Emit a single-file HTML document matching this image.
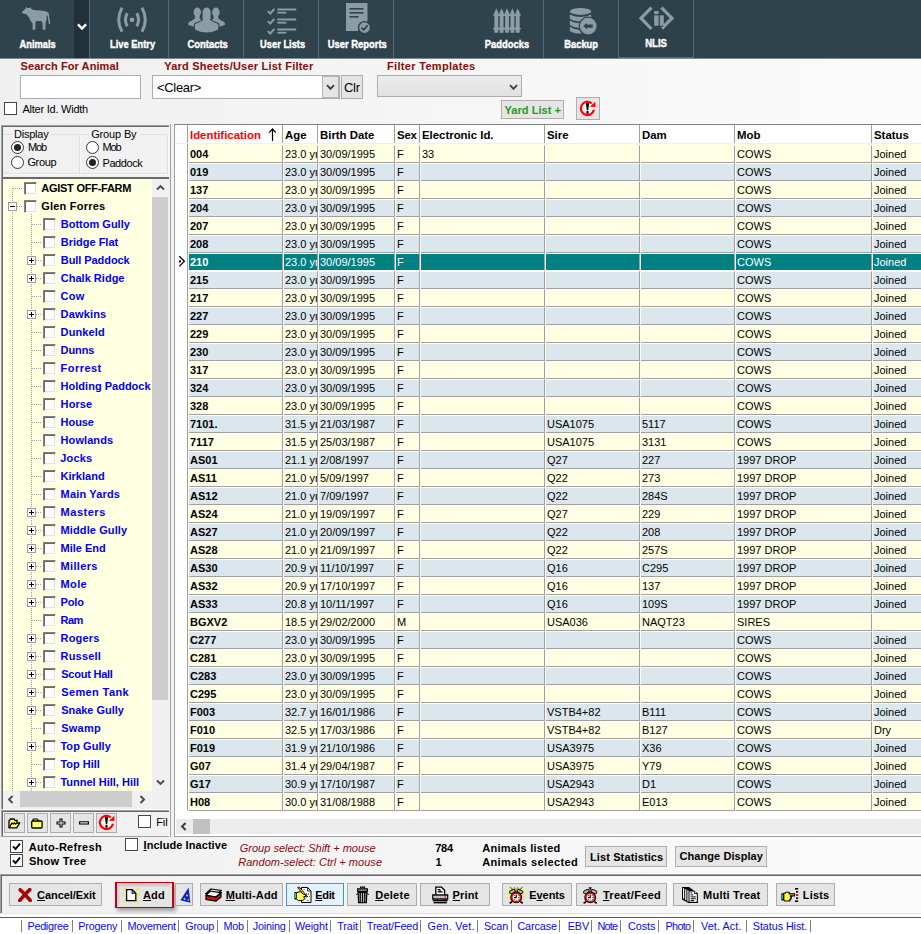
<!DOCTYPE html><html><head><meta charset="utf-8"><title>Animals</title><style>
html,body{margin:0;padding:0;}
body{width:921px;height:934px;overflow:hidden;background:linear-gradient(90deg,#f0f0f0,#fbfbfb);position:relative;
 font-family:"Liberation Sans",sans-serif;font-size:11px;color:#000;}
.a{position:absolute;}
.t{position:absolute;white-space:nowrap;line-height:14px;}
.b{font-weight:bold;}
#tb{position:absolute;left:0;top:0;width:921px;height:58px;background:#2f434d;}
.sep{position:absolute;top:0;width:1px;height:58px;background:#55696f;}
.tbl{position:absolute;top:36.6px;width:100px;text-align:center;color:#fff;font-weight:bold;font-size:10.6px;line-height:14px;white-space:nowrap;-webkit-text-stroke:.4px #fff;}
.tbl span{display:inline-block;transform-origin:50% 50%;}
.inp{position:absolute;background:#fff;border:1px solid #abadb3;box-sizing:border-box;}
.btn{position:absolute;box-sizing:border-box;border:1px solid #adadad;background:#e5e5e5;}
.cb{position:absolute;width:13px;height:13px;box-sizing:border-box;border:1px solid #464646;background:#fff;}
.cb3{position:absolute;width:13px;height:13px;box-sizing:border-box;background:#fff;border:1px solid;border-color:#808080 #fff #fff #808080;box-shadow:inset 1px 1px 0 #696969,inset -1px -1px 0 #e3e3e3;}
.rad{position:absolute;width:13px;height:13px;box-sizing:border-box;border:1px solid #333;border-radius:50%;background:#fff;}
.rad.on:after{content:"";position:absolute;left:2px;top:2px;width:7px;height:7px;border-radius:50%;background:#222;}
.tr{position:absolute;white-space:nowrap;font-weight:bold;font-size:11px;line-height:14px;}
.blue{color:#0000f0;}
.pm{position:absolute;width:9px;height:9px;box-sizing:border-box;border:1px solid #9a9aa6;background:#fff;}
.pm:before{content:"";position:absolute;left:1px;top:3px;width:5px;height:1px;background:#000;}
.pm.plus:after{content:"";position:absolute;left:3px;top:1px;width:1px;height:5px;background:#000;}
.dv{position:absolute;width:1px;background-image:linear-gradient(#a0a0a0 50%,transparent 50%);background-size:1px 2px;}
.dh{position:absolute;height:1px;background-image:linear-gradient(90deg,#a0a0a0 50%,transparent 50%);background-size:2px 1px;}
.row{position:absolute;left:188px;width:733px;height:18px;}
.cell{position:absolute;top:0;height:18px;box-sizing:border-box;border-top:1px solid #fff;border-bottom:1px solid #a0a0a0;border-right:1px solid #a0a0a0;border-left:1px solid #fff;overflow:hidden;white-space:nowrap;line-height:16px;padding-left:1px;font-size:11px;}
.y .cell{background:#ffffe4;}
.g .cell{background:#dbe6ed;}
.s .cell{background:#008080;color:#fff;border-bottom-color:#fff;}
.hc{position:absolute;top:125px;height:19px;box-sizing:border-box;border-right:1px solid #a0a0a0;line-height:21px;font-weight:bold;font-size:11.4px;padding-left:2px;white-space:nowrap;overflow:hidden;background:#fff;}
.tsep{position:absolute;top:920px;width:1px;height:12px;background:#808080;}
u{text-decoration:underline;}
</style></head><body>
<div class="a" style="left:0;top:58px;width:921px;height:1px;background:#7a8990"></div>
<div id="tb">
<div class="a" style="left:74px;top:0;width:15px;height:58px;background:#20313a"></div>
<svg class="a" style="left:77px;top:23px" width="10" height="8" viewBox="0 0 10 8"><path d="M0.9 1.4 L5 5.5 L9.1 1.4" fill="none" stroke="#fff" stroke-width="2.4"/></svg>
<div class="a" style="left:619px;top:0;width:74px;height:57px;background:#2d414b;border-bottom:1px solid #55696f"></div>
<div class="sep" style="left:89px"></div>
<div class="sep" style="left:168px"></div>
<div class="sep" style="left:243px"></div>
<div class="sep" style="left:318px"></div>
<div class="sep" style="left:393px"></div>
<div class="sep" style="left:543px"></div>
<div class="sep" style="left:618px"></div>
<div class="sep" style="left:693px"></div>
<div class="tbl" style="left:-12.25px;margin-top:0px"><span style="transform:scaleX(0.881)">Animals</span></div>
<div class="tbl" style="left:82.45px;margin-top:0px"><span style="transform:scaleX(0.880)">Live Entry</span></div>
<div class="tbl" style="left:157.20px;margin-top:0px"><span style="transform:scaleX(0.890)">Contacts</span></div>
<div class="tbl" style="left:232.35px;margin-top:0px"><span style="transform:scaleX(0.880)">User Lists</span></div>
<div class="tbl" style="left:307.50px;margin-top:0px"><span style="transform:scaleX(0.889)">User Reports</span></div>
<div class="tbl" style="left:457.20px;margin-top:0px"><span style="transform:scaleX(0.886)">Paddocks</span></div>
<div class="tbl" style="left:531.30px;margin-top:0px"><span style="transform:scaleX(0.877)">Backup</span></div>
<div class="tbl" style="left:606.45px;margin-top:-0.8px"><span style="transform:scaleX(0.900)">NLIS</span></div>
<svg class="a" style="left:0;top:0" width="921" height="58" viewBox="0 0 921 58"><path fill="#8b9ca6" d="M21.8 12 L23.5 10.6 L25.6 8.8 L26 7 L27.6 8.1 L29.6 8.1 L30.8 6.9 L31.2 9 L34 10 L40 10.4 L45.3 11.2 L47.6 12 L48.8 13.6 L49.4 18 L50.2 22 L50 24.2 L48.8 24 L48.4 21 L47.6 15.6 L46.8 15.4 L46.5 20 L45.6 22.6 L45.5 29.8 L42.7 29.8 L42.6 23.6 L41.4 21 L36.6 21 L35.4 22.6 L35.4 29.8 L32.6 29.8 L32.6 23.6 L30.4 20.6 L28.8 17 L26.4 14.2 L24 13.8 L22.2 13.2 Z"/><g fill="none" stroke="#8b9ca6" stroke-width="3"><path d="M122 7.8 Q115.4 19.8 122 31.8"/><path d="M142 7.8 Q148.6 19.8 142 31.8"/><path d="M127.2 13.3 Q123.8 19.8 127.2 26.3"/><path d="M136.8 13.3 Q140.2 19.8 136.8 26.3"/></g><circle cx="132" cy="19.8" r="2.4" fill="#8b9ca6"/><ellipse cx="197.3" cy="12.2" rx="3.7" ry="4.7" fill="#8b9ca6"/><path fill="#8b9ca6" d="M195.0 16 L195.0 18.2 L192.0 20.6 L189.4 21.8 L188.3 23 L188.4 25 L193.6 26.8 L202.0 21 L199.6 18.2 L199.6 16 Z"/><ellipse cx="215.9" cy="12.2" rx="3.7" ry="4.7" fill="#8b9ca6"/><path fill="#8b9ca6" d="M218.2 16 L218.2 18.2 L221.2 20.6 L223.8 21.8 L224.9 23 L224.8 25 L219.6 26.8 L211.2 21 L213.6 18.2 L213.6 16 Z"/><ellipse cx="206.6" cy="12.6" rx="4.7" ry="5.7" fill="#8b9ca6" stroke="#2f434d" stroke-width="1.1"/><path fill="#8b9ca6" stroke="#2f434d" stroke-width="1.1" d="M202.8 16.5 L202.8 19 Q202.5 20.5 199 21.8 L195.5 23.2 Q194.2 23.8 194.2 25.5 L194.4 29.6 Q200 33 206.6 33 Q213.2 33 218.8 29.6 L219 25.5 Q219 23.8 217.8 23.2 L214.2 21.8 Q210.7 20.5 210.4 19 L210.4 16.5 Z"/><rect x="202.6" y="14" width="8" height="5" fill="#8b9ca6"/><path d="M267.8 11.100000000000001 L270.2 13.5 L274.40000000000003 8.9" fill="none" stroke="#8b9ca6" stroke-width="2"/><rect x="277.4" y="8.5" width="18.8" height="2" fill="#8b9ca6"/><rect x="277.4" y="11.8" width="9" height="1.8" fill="#8b9ca6"/><path d="M267.8 21.099999999999998 L270.2 23.5 L274.40000000000003 18.9" fill="none" stroke="#8b9ca6" stroke-width="2"/><rect x="277.4" y="18.5" width="18.8" height="2" fill="#8b9ca6"/><rect x="277.4" y="21.8" width="9" height="1.8" fill="#8b9ca6"/><path d="M267.8 31.099999999999998 L270.2 33.5 L274.40000000000003 28.9" fill="none" stroke="#8b9ca6" stroke-width="2"/><rect x="277.4" y="28.5" width="18.8" height="2" fill="#8b9ca6"/><rect x="277.4" y="31.8" width="9" height="1.8" fill="#8b9ca6"/><path fill="#8b9ca6" d="M346 3 H367.5 V21.5 Q358.5 22 358 31 H346 Z"/><g fill="#2f434d"><rect x="349.5" y="8" width="14" height="1.6"/><rect x="349.5" y="12" width="14" height="1.6"/><rect x="349.5" y="16" width="9" height="1.6"/></g><circle cx="364.5" cy="27.6" r="6" fill="#8b9ca6" stroke="#2f434d" stroke-width="1.4"/><path d="M361.4 27.6 L363.8 29.8 L367.6 25.4" fill="none" stroke="#2f434d" stroke-width="1.8"/><path fill="#8b9ca6" d="M494.35 32.7 V12.6 L496.30 8.3 L498.25 12.6 V32.7 Z"/><path fill="#8b9ca6" d="M499.65 32.7 V12.6 L501.60 8.3 L503.55 12.6 V32.7 Z"/><path fill="#8b9ca6" d="M505.05 32.7 V12.6 L507.00 8.3 L508.95 12.6 V32.7 Z"/><path fill="#8b9ca6" d="M510.45 32.7 V12.6 L512.40 8.3 L514.35 12.6 V32.7 Z"/><path fill="#8b9ca6" d="M515.75 32.7 V12.6 L517.70 8.3 L519.65 12.6 V32.7 Z"/><path fill="#8b9ca6" d="M492.8 14.799999999999999 L494 13.7 H520 L521.2 14.799999999999999 L520 15.899999999999999 H494 Z"/><path fill="#8b9ca6" d="M492.8 28.700000000000003 L494 27.6 H520 L521.2 28.700000000000003 L520 29.8 H494 Z"/><g fill="#8b9ca6"><ellipse cx="580.5" cy="11.4" rx="10.7" ry="3.5"/><path d="M569.8 14.6 Q580.5 19.6 591.2 14.6 V17.2 Q583 18 580.6 21.4 Q574 21.4 569.8 18.8 Z"/><path d="M569.8 20.6 Q574 23.2 579.8 23.2 Q578.9 25.6 579.2 28 Q573.4 27.6 569.8 25 Z"/><path d="M569.8 26.8 Q573.4 29.4 579.5 29.8 Q580.4 32.2 582 33.6 Q574 33.8 569.8 31 Z"/><circle cx="588.2" cy="26.1" r="9" stroke="#2f434d" stroke-width="1.2"/></g><path d="M583.1 26.1 L586.8 22.9 V24.5 H592.8 V27.7 H586.8 V29.3 Z" fill="#2f434d"/><g fill="none" stroke="#8b9ca6" stroke-width="3.2"><path d="M651.5 7.6 L641 18.2 L651.5 29"/><path d="M661.5 7.6 L672 18.2 L663.5 26.6"/></g><g fill="#8b9ca6"><rect x="654.2" y="11" width="4.4" height="3"/><rect x="654.2" y="15.3" width="4.4" height="10.4"/><rect x="659.8" y="15.3" width="4" height="10.4"/><path d="M660.6 27 H665.6 L663.1 29.8 Z"/></g></svg>
</div>
<div class="t" style="left:20.50px;top:59px;font-size:11px;letter-spacing:0.091px;font-weight:bold;color:#8b0a0a;">Search For Animal</div>
<div class="inp" style="left:20px;top:75px;width:121px;height:24px"></div>
<div class="cb" style="left:4px;top:102px"></div>
<div class="t" style="left:22.50px;top:102px;font-size:11px;letter-spacing:-0.239px;">Alter Id. Width</div>
<div class="t" style="left:164.25px;top:59px;font-size:11px;letter-spacing:0.220px;font-weight:bold;color:#8b0a0a;">Yard Sheets/User List Filter</div>
<div class="inp" style="left:152px;top:75px;width:188px;height:24px"><div class="t" style="left:4.00px;top:4px;font-size:13px;letter-spacing:-0.330px;line-height:15px;">&lt;Clear&gt;</div><div class="a" style="right:0;top:0;width:17px;height:22px;box-sizing:border-box;background:#e5e5e5;border:1px solid #b4b4b4"></div><svg class="a" style="right:4px;top:8px" width="9" height="7" viewBox="0 0 9 7"><path d="M1 1.2 L4.5 4.8 L8 1.2" fill="none" stroke="#404040" stroke-width="1.9"/></svg></div>
<div class="btn" style="left:341px;top:75px;width:22px;height:24px"><div class="t" style="left:2.00px;top:4px;font-size:13px;letter-spacing:-0.287px;line-height:15px;">Clr</div></div>
<div class="t" style="left:387.10px;top:59px;font-size:11px;letter-spacing:0.305px;font-weight:bold;color:#8b0a0a;">Filter Templates</div>
<div class="a" style="left:377px;top:75px;width:145px;height:22px;box-sizing:border-box;border:1px solid #adadad;background:linear-gradient(#ececec,#e1e1e1)"><svg class="a" style="right:3px;top:8px" width="9" height="7" viewBox="0 0 9 7"><path d="M1 1.2 L4.5 4.8 L8 1.2" fill="none" stroke="#404040" stroke-width="1.9"/></svg></div>
<div class="btn" style="left:501px;top:100px;width:63px;height:19px"><div class="t" style="left:2.60px;top:2px;font-size:11px;letter-spacing:0.044px;font-weight:bold;color:#1c9b1c;">Yard List +</div></div>
<div class="btn" style="left:576px;top:97px;width:24px;height:23px"><svg class="a" style="left:2px;top:2px" width="17" height="17" viewBox="0 0 17 17"><circle cx="8.5" cy="8.4" r="6.6" fill="#f6f6f6"/><path d="M14.95 9.8 A6.6 6.6 0 1 1 12.74 3.34" fill="none" stroke="#ff0000" stroke-width="2.2"/><path d="M10.8 6.7 L16.4 1.7 L16.4 6.9 Z" fill="#ff0000"/><path d="M6.9 3.1 H10.1 L9.2 10.2 H7.8 Z" fill="#000"/><rect x="7.3" y="11.1" width="2.4" height="2.6" rx=".8" fill="#000"/></svg></div>
<div class="a" style="left:1px;top:125px;width:168px;height:685px;box-sizing:border-box;border-top:1px solid #a0a0a0;border-left:1px solid #a0a0a0;border-bottom:1px solid #fff;box-shadow:inset 1px 1px 0 #696969;"></div>
<div class="a" style="left:1px;top:810px;width:168px;height:27px;box-sizing:border-box;border-top:1px solid #a0a0a0;border-left:1px solid #a0a0a0;border-bottom:1px solid #a0a0a0;box-shadow:inset 1px 1px 0 #696969;"></div>
<div class="a" style="left:169px;top:124px;width:1px;height:713px;background:#f8f8f8"></div><div class="a" style="left:170px;top:124px;width:1px;height:713px;background:#a0a0a0"></div>
<div class="a" style="left:3px;top:134px;width:77px;height:40px;box-sizing:border-box;border:1px solid #e0e0e0;border-left:none;box-shadow:1px 1px 0 #fafafa"></div>
<div class="a" style="left:80px;top:134px;width:88px;height:40px;box-sizing:border-box;border:1px solid #e0e0e0;border-left:none;box-shadow:1px 1px 0 #fafafa"></div>
<div class="a" style="left:12px;top:130px;width:39px;height:8px;background:#f0f0f0"></div>
<div class="a" style="left:89px;top:130px;width:50px;height:8px;background:#f0f0f0"></div>
<div class="t" style="left:14.00px;top:127px;font-size:11px;letter-spacing:-0.232px;">Display</div>
<div class="t" style="left:91.20px;top:127px;font-size:11px;letter-spacing:-0.154px;">Group By</div>
<div class="rad on" style="left:11px;top:141px"></div><div class="t" style="left:27.90px;top:140px;font-size:11px;letter-spacing:-1.141px;">Mob</div>
<div class="rad" style="left:11px;top:156px"></div><div class="t" style="left:27.40px;top:155px;font-size:11px;letter-spacing:-0.323px;">Group</div>
<div class="rad" style="left:86px;top:141px"></div><div class="t" style="left:102.50px;top:140px;font-size:11px;letter-spacing:-1.091px;">Mob</div>
<div class="rad on" style="left:86px;top:156px"></div><div class="t" style="left:102.50px;top:156px;font-size:11px;letter-spacing:-0.433px;">Paddock</div>
<div class="a" style="left:3px;top:177px;width:166px;height:2px;background:#696969;z-index:3"></div>
<div class="a" style="left:3px;top:178px;width:149px;height:613px;background:#ffffe1;overflow:hidden">
<div class="dv" style="left:9px;top:10px;height:604px"></div>
<div class="dv" style="left:28px;top:36px;height:578px"></div>
<div class="dh" style="left:10px;top:10px;width:10px"></div>
<div class="cb3" style="left:21px;top:4px"></div>
<div class="t" style="left:38.20px;top:3px;font-size:11px;letter-spacing:-0.246px;font-weight:bold;">AGIST OFF-FARM</div>
<div class="dh" style="left:10px;top:28px;width:10px"></div>
<div class="pm minus" style="left:5px;top:24px"></div>
<div class="cb3" style="left:21px;top:22px"></div>
<div class="t" style="left:38.20px;top:21px;font-size:11px;letter-spacing:0.216px;font-weight:bold;">Glen Forres</div>
<div class="dh" style="left:29px;top:46px;width:9px"></div>
<div class="cb3" style="left:40px;top:40px"></div>
<div class="t" style="left:57.80px;top:39px;font-size:11px;letter-spacing:-0.002px;font-weight:bold;color:#0000f0;">Bottom Gully</div>
<div class="dh" style="left:29px;top:64px;width:9px"></div>
<div class="cb3" style="left:40px;top:58px"></div>
<div class="t" style="left:57.80px;top:57px;font-size:11px;letter-spacing:-0.007px;font-weight:bold;color:#0000f0;">Bridge Flat</div>
<div class="dh" style="left:29px;top:82px;width:9px"></div>
<div class="pm plus" style="left:24px;top:78px"></div>
<div class="cb3" style="left:40px;top:76px"></div>
<div class="t" style="left:57.80px;top:75px;font-size:11px;letter-spacing:-0.071px;font-weight:bold;color:#0000f0;">Bull Paddock</div>
<div class="dh" style="left:29px;top:100px;width:9px"></div>
<div class="pm plus" style="left:24px;top:96px"></div>
<div class="cb3" style="left:40px;top:94px"></div>
<div class="t" style="left:57.80px;top:93px;font-size:11px;letter-spacing:0.011px;font-weight:bold;color:#0000f0;">Chalk Ridge</div>
<div class="dh" style="left:29px;top:118px;width:9px"></div>
<div class="cb3" style="left:40px;top:112px"></div>
<div class="t" style="left:57.60px;top:111px;font-size:11px;letter-spacing:0.231px;font-weight:bold;color:#0000f0;">Cow</div>
<div class="dh" style="left:29px;top:136px;width:9px"></div>
<div class="pm plus" style="left:24px;top:132px"></div>
<div class="cb3" style="left:40px;top:130px"></div>
<div class="t" style="left:57.60px;top:129px;font-size:11px;letter-spacing:0.164px;font-weight:bold;color:#0000f0;">Dawkins</div>
<div class="dh" style="left:29px;top:154px;width:9px"></div>
<div class="cb3" style="left:40px;top:148px"></div>
<div class="t" style="left:57.60px;top:147px;font-size:11px;letter-spacing:0.103px;font-weight:bold;color:#0000f0;">Dunkeld</div>
<div class="dh" style="left:29px;top:172px;width:9px"></div>
<div class="cb3" style="left:40px;top:166px"></div>
<div class="t" style="left:57.60px;top:165px;font-size:11px;letter-spacing:-0.084px;font-weight:bold;color:#0000f0;">Dunns</div>
<div class="dh" style="left:29px;top:190px;width:9px"></div>
<div class="cb3" style="left:40px;top:184px"></div>
<div class="t" style="left:57.60px;top:183px;font-size:11px;letter-spacing:0.453px;font-weight:bold;color:#0000f0;">Forrest</div>
<div class="dh" style="left:29px;top:208px;width:9px"></div>
<div class="cb3" style="left:40px;top:202px"></div>
<div class="t" style="left:57.60px;top:201px;font-size:11px;letter-spacing:0.012px;font-weight:bold;color:#0000f0;">Holding Paddock</div>
<div class="dh" style="left:29px;top:226px;width:9px"></div>
<div class="cb3" style="left:40px;top:220px"></div>
<div class="t" style="left:57.60px;top:219px;font-size:11px;letter-spacing:0.097px;font-weight:bold;color:#0000f0;">Horse</div>
<div class="dh" style="left:29px;top:244px;width:9px"></div>
<div class="cb3" style="left:40px;top:238px"></div>
<div class="t" style="left:57.60px;top:237px;font-size:11px;letter-spacing:-0.055px;font-weight:bold;color:#0000f0;">House</div>
<div class="dh" style="left:29px;top:262px;width:9px"></div>
<div class="cb3" style="left:40px;top:256px"></div>
<div class="t" style="left:57.60px;top:255px;font-size:11px;letter-spacing:0.075px;font-weight:bold;color:#0000f0;">Howlands</div>
<div class="dh" style="left:29px;top:280px;width:9px"></div>
<div class="cb3" style="left:40px;top:274px"></div>
<div class="t" style="left:57.30px;top:273px;font-size:11px;letter-spacing:0.172px;font-weight:bold;color:#0000f0;">Jocks</div>
<div class="dh" style="left:29px;top:298px;width:9px"></div>
<div class="cb3" style="left:40px;top:292px"></div>
<div class="t" style="left:57.60px;top:291px;font-size:11px;letter-spacing:-0.000px;font-weight:bold;color:#0000f0;">Kirkland</div>
<div class="dh" style="left:29px;top:316px;width:9px"></div>
<div class="cb3" style="left:40px;top:310px"></div>
<div class="t" style="left:57.60px;top:309px;font-size:11px;letter-spacing:0.157px;font-weight:bold;color:#0000f0;">Main Yards</div>
<div class="dh" style="left:29px;top:334px;width:9px"></div>
<div class="pm plus" style="left:24px;top:330px"></div>
<div class="cb3" style="left:40px;top:328px"></div>
<div class="t" style="left:57.60px;top:327px;font-size:11px;letter-spacing:0.518px;font-weight:bold;color:#0000f0;">Masters</div>
<div class="dh" style="left:29px;top:352px;width:9px"></div>
<div class="pm plus" style="left:24px;top:348px"></div>
<div class="cb3" style="left:40px;top:346px"></div>
<div class="t" style="left:57.60px;top:345px;font-size:11px;letter-spacing:0.102px;font-weight:bold;color:#0000f0;">Middle Gully</div>
<div class="dh" style="left:29px;top:370px;width:9px"></div>
<div class="pm plus" style="left:24px;top:366px"></div>
<div class="cb3" style="left:40px;top:364px"></div>
<div class="t" style="left:57.60px;top:363px;font-size:11px;letter-spacing:-0.020px;font-weight:bold;color:#0000f0;">Mile End</div>
<div class="dh" style="left:29px;top:388px;width:9px"></div>
<div class="pm plus" style="left:24px;top:384px"></div>
<div class="cb3" style="left:40px;top:382px"></div>
<div class="t" style="left:57.60px;top:381px;font-size:11px;letter-spacing:0.324px;font-weight:bold;color:#0000f0;">Millers</div>
<div class="dh" style="left:29px;top:406px;width:9px"></div>
<div class="pm plus" style="left:24px;top:402px"></div>
<div class="cb3" style="left:40px;top:400px"></div>
<div class="t" style="left:57.60px;top:399px;font-size:11px;letter-spacing:0.325px;font-weight:bold;color:#0000f0;">Mole</div>
<div class="dh" style="left:29px;top:424px;width:9px"></div>
<div class="pm plus" style="left:24px;top:420px"></div>
<div class="cb3" style="left:40px;top:418px"></div>
<div class="t" style="left:57.60px;top:417px;font-size:11px;letter-spacing:-0.185px;font-weight:bold;color:#0000f0;">Polo</div>
<div class="dh" style="left:29px;top:442px;width:9px"></div>
<div class="cb3" style="left:40px;top:436px"></div>
<div class="t" style="left:57.60px;top:435px;font-size:11px;letter-spacing:-0.628px;font-weight:bold;color:#0000f0;">Ram</div>
<div class="dh" style="left:29px;top:460px;width:9px"></div>
<div class="pm plus" style="left:24px;top:456px"></div>
<div class="cb3" style="left:40px;top:454px"></div>
<div class="t" style="left:57.60px;top:453px;font-size:11px;letter-spacing:0.184px;font-weight:bold;color:#0000f0;">Rogers</div>
<div class="dh" style="left:29px;top:478px;width:9px"></div>
<div class="pm plus" style="left:24px;top:474px"></div>
<div class="cb3" style="left:40px;top:472px"></div>
<div class="t" style="left:57.60px;top:471px;font-size:11px;letter-spacing:0.180px;font-weight:bold;color:#0000f0;">Russell</div>
<div class="dh" style="left:29px;top:496px;width:9px"></div>
<div class="pm plus" style="left:24px;top:492px"></div>
<div class="cb3" style="left:40px;top:490px"></div>
<div class="t" style="left:58.20px;top:489px;font-size:11px;letter-spacing:-0.229px;font-weight:bold;color:#0000f0;">Scout Hall</div>
<div class="dh" style="left:29px;top:514px;width:9px"></div>
<div class="pm plus" style="left:24px;top:510px"></div>
<div class="cb3" style="left:40px;top:508px"></div>
<div class="t" style="left:58.20px;top:507px;font-size:11px;letter-spacing:0.381px;font-weight:bold;color:#0000f0;">Semen Tank</div>
<div class="dh" style="left:29px;top:532px;width:9px"></div>
<div class="pm plus" style="left:24px;top:528px"></div>
<div class="cb3" style="left:40px;top:526px"></div>
<div class="t" style="left:58.20px;top:525px;font-size:11px;letter-spacing:-0.028px;font-weight:bold;color:#0000f0;">Snake Gully</div>
<div class="dh" style="left:29px;top:550px;width:9px"></div>
<div class="cb3" style="left:40px;top:544px"></div>
<div class="t" style="left:58.20px;top:543px;font-size:11px;letter-spacing:0.250px;font-weight:bold;color:#0000f0;">Swamp</div>
<div class="dh" style="left:29px;top:568px;width:9px"></div>
<div class="pm plus" style="left:24px;top:564px"></div>
<div class="cb3" style="left:40px;top:562px"></div>
<div class="t" style="left:57.40px;top:561px;font-size:11px;letter-spacing:0.061px;font-weight:bold;color:#0000f0;">Top Gully</div>
<div class="dh" style="left:29px;top:586px;width:9px"></div>
<div class="cb3" style="left:40px;top:580px"></div>
<div class="t" style="left:57.40px;top:579px;font-size:11px;letter-spacing:-0.019px;font-weight:bold;color:#0000f0;">Top Hill</div>
<div class="dh" style="left:29px;top:604px;width:9px"></div>
<div class="pm plus" style="left:24px;top:600px"></div>
<div class="cb3" style="left:40px;top:598px"></div>
<div class="t" style="left:57.40px;top:597px;font-size:11px;letter-spacing:0.003px;font-weight:bold;color:#0000f0;">Tunnel Hill, Hill</div>
</div>
<div class="a" style="left:152px;top:178px;width:18px;height:613px;background:#f0f0f0"></div>
<div class="a" style="left:152px;top:197px;width:16px;height:503px;background:#cdcdcd"></div>
<svg class="a" style="left:156px;top:184px" width="9" height="7" viewBox="0 0 9 7"><path d="M1 5.5 L4.5 2 L8 5.5" fill="none" stroke="#484848" stroke-width="1.9"/></svg>
<svg class="a" style="left:156px;top:779px" width="9" height="7" viewBox="0 0 9 7"><path d="M1 1.5 L4.5 5 L8 1.5" fill="none" stroke="#484848" stroke-width="1.9"/></svg>
<div class="a" style="left:3px;top:791px;width:167px;height:18px;background:#f0f0f0"></div>
<div class="a" style="left:20px;top:791px;width:112px;height:16px;background:#cdcdcd"></div>
<svg class="a" style="left:7px;top:795px" width="7" height="9" viewBox="0 0 7 9"><path d="M5.5 1 L2 4.5 L5.5 8" fill="none" stroke="#484848" stroke-width="1.9"/></svg>
<svg class="a" style="left:139px;top:795px" width="7" height="9" viewBox="0 0 7 9"><path d="M1.5 1 L5 4.5 L1.5 8" fill="none" stroke="#484848" stroke-width="1.9"/></svg>
<div class="btn" style="left:4px;top:813px;width:21px;height:20px"><svg class="a" style="left:3px;top:4px" width="13" height="11" viewBox="0 0 13 11"><path d="M1 9.5 V3 L2.5 1 H6 L7 2.5 H9 V4.5" fill="#ffff70" stroke="#000" stroke-width="1.3"/><path d="M1 9.8 L4 5 L5.2 6 L6.4 5 L7.6 6 L8.8 5 L11.8 5 L8.6 9.8 Z" fill="#ffff70" stroke="#000" stroke-width="1.3" stroke-linejoin="round"/></svg></div>
<div class="btn" style="left:27px;top:813px;width:21px;height:20px"><svg class="a" style="left:3px;top:4px" width="12" height="11" viewBox="0 0 12 11"><path d="M2 3 V2 Q2 1 3 1 H6 Q7 1 7 2 V3" fill="#ffff70" stroke="#000" stroke-width="1.2"/><rect x="0.7" y="3" width="10.4" height="7" rx="1" fill="#ffff70" stroke="#000" stroke-width="1.3"/></svg></div>
<div class="btn" style="left:50px;top:813px;width:21px;height:20px"><svg class="a" style="left:5px;top:4px" width="11" height="11" viewBox="0 0 11 11"><path d="M4 1 H6 V4 H9 V6 H6 V9 H4 V6 H1 V4 H4 Z" fill="#fff" stroke="#000" stroke-width="1.1"/></svg></div>
<div class="btn" style="left:73px;top:813px;width:21px;height:20px"><svg class="a" style="left:5px;top:7px" width="11" height="5" viewBox="0 0 11 5"><rect x="0.6" y="0.8" width="8.8" height="2.2" fill="#fff" stroke="#000" stroke-width="1.1"/></svg></div>
<div class="btn" style="left:96px;top:813px;width:21px;height:20px"><svg class="a" style="left:1px;top:0px" width="17" height="17" viewBox="0 0 17 17"><circle cx="8.5" cy="8.4" r="6.6" fill="#f6f6f6"/><path d="M14.95 9.8 A6.6 6.6 0 1 1 12.74 3.34" fill="none" stroke="#ff0000" stroke-width="2.2"/><path d="M10.8 6.7 L16.4 1.7 L16.4 6.9 Z" fill="#ff0000"/><path d="M6.9 3.1 H10.1 L9.2 10.2 H7.8 Z" fill="#000"/><rect x="7.3" y="11.1" width="2.4" height="2.6" rx=".8" fill="#000"/></svg></div>
<div class="cb" style="left:138px;top:815px"></div>
<div class="a" style="left:156px;top:815px;width:12px;height:14px;overflow:hidden"><div class="t" style="left:0.2px;top:0;letter-spacing:-.1px">Filter</div></div>
<div class="a" style="left:174px;top:124px;width:747px;height:713px;background:#fff;box-sizing:border-box;border-left:1px solid #a0a0a0;border-top:1px solid #828282;border-bottom:1px solid #a0a0a0"></div>
<div class="a" style="left:187px;top:125px;width:1px;height:685px;background:#a0a0a0"></div>
<div class="hc" style="left:188px;width:95px;color:#ff0000;">Identification</div>
<div class="hc" style="left:283px;width:35px;">Age</div>
<div class="hc" style="left:318px;width:77px;">Birth Date</div>
<div class="hc" style="left:395px;width:25px;letter-spacing:-.2px;">Sex</div>
<div class="hc" style="left:420px;width:125px;">Electronic Id.</div>
<div class="hc" style="left:545px;width:95px;">Sire</div>
<div class="hc" style="left:640px;width:95px;">Dam</div>
<div class="hc" style="left:735px;width:137px;">Mob</div>
<div class="hc" style="left:872px;width:50px;">Status</div>
<svg class="a" style="left:267px;top:128px" width="11" height="14" viewBox="0 0 11 14"><path d="M5.5 1 V13 M2.1 4.7 L5.5 1 L8.9 4.7" fill="none" stroke="#000" stroke-width="1.2"/></svg>
<div class="a" style="left:175px;top:143px;width:746px;height:1px;background:#e8f0fa"></div>
<div class="a" style="left:188px;top:144px;width:733px;height:1px;background:#ffffe4"></div>
<div class="row y" style="top:145px">
<div class="cell" style="left:0px;width:95px;font-weight:bold;border-top-color:#ffffe4;">004</div>
<div class="cell" style="left:95px;width:35px;border-top-color:#ffffe4;">23.0 yr</div>
<div class="cell" style="left:130px;width:77px;border-top-color:#ffffe4;">30/09/1995</div>
<div class="cell" style="left:207px;width:25px;border-top-color:#ffffe4;">F</div>
<div class="cell" style="left:232px;width:125px;border-top-color:#ffffe4;">33</div>
<div class="cell" style="left:357px;width:95px;border-top-color:#ffffe4;"></div>
<div class="cell" style="left:452px;width:95px;border-top-color:#ffffe4;"></div>
<div class="cell" style="left:547px;width:137px;border-top-color:#ffffe4;">COWS</div>
<div class="cell" style="left:684px;width:50px;border-top-color:#ffffe4;">Joined</div>
</div>
<div class="row g" style="top:163px">
<div class="cell" style="left:0px;width:95px;font-weight:bold;">019</div>
<div class="cell" style="left:95px;width:35px;">23.0 yr</div>
<div class="cell" style="left:130px;width:77px;">30/09/1995</div>
<div class="cell" style="left:207px;width:25px;">F</div>
<div class="cell" style="left:232px;width:125px;"></div>
<div class="cell" style="left:357px;width:95px;"></div>
<div class="cell" style="left:452px;width:95px;"></div>
<div class="cell" style="left:547px;width:137px;">COWS</div>
<div class="cell" style="left:684px;width:50px;">Joined</div>
</div>
<div class="row y" style="top:181px">
<div class="cell" style="left:0px;width:95px;font-weight:bold;">137</div>
<div class="cell" style="left:95px;width:35px;">23.0 yr</div>
<div class="cell" style="left:130px;width:77px;">30/09/1995</div>
<div class="cell" style="left:207px;width:25px;">F</div>
<div class="cell" style="left:232px;width:125px;"></div>
<div class="cell" style="left:357px;width:95px;"></div>
<div class="cell" style="left:452px;width:95px;"></div>
<div class="cell" style="left:547px;width:137px;">COWS</div>
<div class="cell" style="left:684px;width:50px;">Joined</div>
</div>
<div class="row g" style="top:199px">
<div class="cell" style="left:0px;width:95px;font-weight:bold;">204</div>
<div class="cell" style="left:95px;width:35px;">23.0 yr</div>
<div class="cell" style="left:130px;width:77px;">30/09/1995</div>
<div class="cell" style="left:207px;width:25px;">F</div>
<div class="cell" style="left:232px;width:125px;"></div>
<div class="cell" style="left:357px;width:95px;"></div>
<div class="cell" style="left:452px;width:95px;"></div>
<div class="cell" style="left:547px;width:137px;">COWS</div>
<div class="cell" style="left:684px;width:50px;">Joined</div>
</div>
<div class="row y" style="top:217px">
<div class="cell" style="left:0px;width:95px;font-weight:bold;">207</div>
<div class="cell" style="left:95px;width:35px;">23.0 yr</div>
<div class="cell" style="left:130px;width:77px;">30/09/1995</div>
<div class="cell" style="left:207px;width:25px;">F</div>
<div class="cell" style="left:232px;width:125px;"></div>
<div class="cell" style="left:357px;width:95px;"></div>
<div class="cell" style="left:452px;width:95px;"></div>
<div class="cell" style="left:547px;width:137px;">COWS</div>
<div class="cell" style="left:684px;width:50px;">Joined</div>
</div>
<div class="row g" style="top:235px">
<div class="cell" style="left:0px;width:95px;font-weight:bold;">208</div>
<div class="cell" style="left:95px;width:35px;">23.0 yr</div>
<div class="cell" style="left:130px;width:77px;">30/09/1995</div>
<div class="cell" style="left:207px;width:25px;">F</div>
<div class="cell" style="left:232px;width:125px;"></div>
<div class="cell" style="left:357px;width:95px;"></div>
<div class="cell" style="left:452px;width:95px;"></div>
<div class="cell" style="left:547px;width:137px;">COWS</div>
<div class="cell" style="left:684px;width:50px;">Joined</div>
</div>
<div class="row s" style="top:253px">
<div class="cell" style="left:0px;width:95px;font-weight:bold;">210</div>
<div class="cell" style="left:95px;width:35px;">23.0 yr</div>
<div class="cell" style="left:130px;width:77px;">30/09/1995</div>
<div class="cell" style="left:207px;width:25px;">F</div>
<div class="cell" style="left:232px;width:125px;"></div>
<div class="cell" style="left:357px;width:95px;"></div>
<div class="cell" style="left:452px;width:95px;"></div>
<div class="cell" style="left:547px;width:137px;">COWS</div>
<div class="cell" style="left:684px;width:50px;">Joined</div>
</div>
<div class="row g" style="top:271px">
<div class="cell" style="left:0px;width:95px;font-weight:bold;">215</div>
<div class="cell" style="left:95px;width:35px;">23.0 yr</div>
<div class="cell" style="left:130px;width:77px;">30/09/1995</div>
<div class="cell" style="left:207px;width:25px;">F</div>
<div class="cell" style="left:232px;width:125px;"></div>
<div class="cell" style="left:357px;width:95px;"></div>
<div class="cell" style="left:452px;width:95px;"></div>
<div class="cell" style="left:547px;width:137px;">COWS</div>
<div class="cell" style="left:684px;width:50px;">Joined</div>
</div>
<div class="row y" style="top:289px">
<div class="cell" style="left:0px;width:95px;font-weight:bold;">217</div>
<div class="cell" style="left:95px;width:35px;">23.0 yr</div>
<div class="cell" style="left:130px;width:77px;">30/09/1995</div>
<div class="cell" style="left:207px;width:25px;">F</div>
<div class="cell" style="left:232px;width:125px;"></div>
<div class="cell" style="left:357px;width:95px;"></div>
<div class="cell" style="left:452px;width:95px;"></div>
<div class="cell" style="left:547px;width:137px;">COWS</div>
<div class="cell" style="left:684px;width:50px;">Joined</div>
</div>
<div class="row g" style="top:307px">
<div class="cell" style="left:0px;width:95px;font-weight:bold;">227</div>
<div class="cell" style="left:95px;width:35px;">23.0 yr</div>
<div class="cell" style="left:130px;width:77px;">30/09/1995</div>
<div class="cell" style="left:207px;width:25px;">F</div>
<div class="cell" style="left:232px;width:125px;"></div>
<div class="cell" style="left:357px;width:95px;"></div>
<div class="cell" style="left:452px;width:95px;"></div>
<div class="cell" style="left:547px;width:137px;">COWS</div>
<div class="cell" style="left:684px;width:50px;">Joined</div>
</div>
<div class="row y" style="top:325px">
<div class="cell" style="left:0px;width:95px;font-weight:bold;">229</div>
<div class="cell" style="left:95px;width:35px;">23.0 yr</div>
<div class="cell" style="left:130px;width:77px;">30/09/1995</div>
<div class="cell" style="left:207px;width:25px;">F</div>
<div class="cell" style="left:232px;width:125px;"></div>
<div class="cell" style="left:357px;width:95px;"></div>
<div class="cell" style="left:452px;width:95px;"></div>
<div class="cell" style="left:547px;width:137px;">COWS</div>
<div class="cell" style="left:684px;width:50px;">Joined</div>
</div>
<div class="row g" style="top:343px">
<div class="cell" style="left:0px;width:95px;font-weight:bold;">230</div>
<div class="cell" style="left:95px;width:35px;">23.0 yr</div>
<div class="cell" style="left:130px;width:77px;">30/09/1995</div>
<div class="cell" style="left:207px;width:25px;">F</div>
<div class="cell" style="left:232px;width:125px;"></div>
<div class="cell" style="left:357px;width:95px;"></div>
<div class="cell" style="left:452px;width:95px;"></div>
<div class="cell" style="left:547px;width:137px;">COWS</div>
<div class="cell" style="left:684px;width:50px;">Joined</div>
</div>
<div class="row y" style="top:361px">
<div class="cell" style="left:0px;width:95px;font-weight:bold;">317</div>
<div class="cell" style="left:95px;width:35px;">23.0 yr</div>
<div class="cell" style="left:130px;width:77px;">30/09/1995</div>
<div class="cell" style="left:207px;width:25px;">F</div>
<div class="cell" style="left:232px;width:125px;"></div>
<div class="cell" style="left:357px;width:95px;"></div>
<div class="cell" style="left:452px;width:95px;"></div>
<div class="cell" style="left:547px;width:137px;">COWS</div>
<div class="cell" style="left:684px;width:50px;">Joined</div>
</div>
<div class="row g" style="top:379px">
<div class="cell" style="left:0px;width:95px;font-weight:bold;">324</div>
<div class="cell" style="left:95px;width:35px;">23.0 yr</div>
<div class="cell" style="left:130px;width:77px;">30/09/1995</div>
<div class="cell" style="left:207px;width:25px;">F</div>
<div class="cell" style="left:232px;width:125px;"></div>
<div class="cell" style="left:357px;width:95px;"></div>
<div class="cell" style="left:452px;width:95px;"></div>
<div class="cell" style="left:547px;width:137px;">COWS</div>
<div class="cell" style="left:684px;width:50px;">Joined</div>
</div>
<div class="row y" style="top:397px">
<div class="cell" style="left:0px;width:95px;font-weight:bold;">328</div>
<div class="cell" style="left:95px;width:35px;">23.0 yr</div>
<div class="cell" style="left:130px;width:77px;">30/09/1995</div>
<div class="cell" style="left:207px;width:25px;">F</div>
<div class="cell" style="left:232px;width:125px;"></div>
<div class="cell" style="left:357px;width:95px;"></div>
<div class="cell" style="left:452px;width:95px;"></div>
<div class="cell" style="left:547px;width:137px;">COWS</div>
<div class="cell" style="left:684px;width:50px;">Joined</div>
</div>
<div class="row g" style="top:415px">
<div class="cell" style="left:0px;width:95px;font-weight:bold;">7101.</div>
<div class="cell" style="left:95px;width:35px;">31.5 yr</div>
<div class="cell" style="left:130px;width:77px;">21/03/1987</div>
<div class="cell" style="left:207px;width:25px;">F</div>
<div class="cell" style="left:232px;width:125px;"></div>
<div class="cell" style="left:357px;width:95px;">USA1075</div>
<div class="cell" style="left:452px;width:95px;">5117</div>
<div class="cell" style="left:547px;width:137px;">COWS</div>
<div class="cell" style="left:684px;width:50px;">Joined</div>
</div>
<div class="row y" style="top:433px">
<div class="cell" style="left:0px;width:95px;font-weight:bold;">7117</div>
<div class="cell" style="left:95px;width:35px;">31.5 yr</div>
<div class="cell" style="left:130px;width:77px;">25/03/1987</div>
<div class="cell" style="left:207px;width:25px;">F</div>
<div class="cell" style="left:232px;width:125px;"></div>
<div class="cell" style="left:357px;width:95px;">USA1075</div>
<div class="cell" style="left:452px;width:95px;">3131</div>
<div class="cell" style="left:547px;width:137px;">COWS</div>
<div class="cell" style="left:684px;width:50px;">Joined</div>
</div>
<div class="row g" style="top:451px">
<div class="cell" style="left:0px;width:95px;font-weight:bold;">AS01</div>
<div class="cell" style="left:95px;width:35px;">21.1 yr</div>
<div class="cell" style="left:130px;width:77px;">2/08/1997</div>
<div class="cell" style="left:207px;width:25px;">F</div>
<div class="cell" style="left:232px;width:125px;"></div>
<div class="cell" style="left:357px;width:95px;">Q27</div>
<div class="cell" style="left:452px;width:95px;">227</div>
<div class="cell" style="left:547px;width:137px;">1997 DROP</div>
<div class="cell" style="left:684px;width:50px;">Joined</div>
</div>
<div class="row y" style="top:469px">
<div class="cell" style="left:0px;width:95px;font-weight:bold;">AS11</div>
<div class="cell" style="left:95px;width:35px;">21.0 yr</div>
<div class="cell" style="left:130px;width:77px;">5/09/1997</div>
<div class="cell" style="left:207px;width:25px;">F</div>
<div class="cell" style="left:232px;width:125px;"></div>
<div class="cell" style="left:357px;width:95px;">Q22</div>
<div class="cell" style="left:452px;width:95px;">273</div>
<div class="cell" style="left:547px;width:137px;">1997 DROP</div>
<div class="cell" style="left:684px;width:50px;">Joined</div>
</div>
<div class="row g" style="top:487px">
<div class="cell" style="left:0px;width:95px;font-weight:bold;">AS12</div>
<div class="cell" style="left:95px;width:35px;">21.0 yr</div>
<div class="cell" style="left:130px;width:77px;">7/09/1997</div>
<div class="cell" style="left:207px;width:25px;">F</div>
<div class="cell" style="left:232px;width:125px;"></div>
<div class="cell" style="left:357px;width:95px;">Q22</div>
<div class="cell" style="left:452px;width:95px;">284S</div>
<div class="cell" style="left:547px;width:137px;">1997 DROP</div>
<div class="cell" style="left:684px;width:50px;">Joined</div>
</div>
<div class="row y" style="top:505px">
<div class="cell" style="left:0px;width:95px;font-weight:bold;">AS24</div>
<div class="cell" style="left:95px;width:35px;">21.0 yr</div>
<div class="cell" style="left:130px;width:77px;">19/09/1997</div>
<div class="cell" style="left:207px;width:25px;">F</div>
<div class="cell" style="left:232px;width:125px;"></div>
<div class="cell" style="left:357px;width:95px;">Q27</div>
<div class="cell" style="left:452px;width:95px;">229</div>
<div class="cell" style="left:547px;width:137px;">1997 DROP</div>
<div class="cell" style="left:684px;width:50px;">Joined</div>
</div>
<div class="row g" style="top:523px">
<div class="cell" style="left:0px;width:95px;font-weight:bold;">AS27</div>
<div class="cell" style="left:95px;width:35px;">21.0 yr</div>
<div class="cell" style="left:130px;width:77px;">20/09/1997</div>
<div class="cell" style="left:207px;width:25px;">F</div>
<div class="cell" style="left:232px;width:125px;"></div>
<div class="cell" style="left:357px;width:95px;">Q22</div>
<div class="cell" style="left:452px;width:95px;">208</div>
<div class="cell" style="left:547px;width:137px;">1997 DROP</div>
<div class="cell" style="left:684px;width:50px;">Joined</div>
</div>
<div class="row y" style="top:541px">
<div class="cell" style="left:0px;width:95px;font-weight:bold;">AS28</div>
<div class="cell" style="left:95px;width:35px;">21.0 yr</div>
<div class="cell" style="left:130px;width:77px;">21/09/1997</div>
<div class="cell" style="left:207px;width:25px;">F</div>
<div class="cell" style="left:232px;width:125px;"></div>
<div class="cell" style="left:357px;width:95px;">Q22</div>
<div class="cell" style="left:452px;width:95px;">257S</div>
<div class="cell" style="left:547px;width:137px;">1997 DROP</div>
<div class="cell" style="left:684px;width:50px;">Joined</div>
</div>
<div class="row g" style="top:559px">
<div class="cell" style="left:0px;width:95px;font-weight:bold;">AS30</div>
<div class="cell" style="left:95px;width:35px;">20.9 yr</div>
<div class="cell" style="left:130px;width:77px;">11/10/1997</div>
<div class="cell" style="left:207px;width:25px;">F</div>
<div class="cell" style="left:232px;width:125px;"></div>
<div class="cell" style="left:357px;width:95px;">Q16</div>
<div class="cell" style="left:452px;width:95px;">C295</div>
<div class="cell" style="left:547px;width:137px;">1997 DROP</div>
<div class="cell" style="left:684px;width:50px;">Joined</div>
</div>
<div class="row y" style="top:577px">
<div class="cell" style="left:0px;width:95px;font-weight:bold;">AS32</div>
<div class="cell" style="left:95px;width:35px;">20.9 yr</div>
<div class="cell" style="left:130px;width:77px;">17/10/1997</div>
<div class="cell" style="left:207px;width:25px;">F</div>
<div class="cell" style="left:232px;width:125px;"></div>
<div class="cell" style="left:357px;width:95px;">Q16</div>
<div class="cell" style="left:452px;width:95px;">137</div>
<div class="cell" style="left:547px;width:137px;">1997 DROP</div>
<div class="cell" style="left:684px;width:50px;">Joined</div>
</div>
<div class="row g" style="top:595px">
<div class="cell" style="left:0px;width:95px;font-weight:bold;">AS33</div>
<div class="cell" style="left:95px;width:35px;">20.8 yr</div>
<div class="cell" style="left:130px;width:77px;">10/11/1997</div>
<div class="cell" style="left:207px;width:25px;">F</div>
<div class="cell" style="left:232px;width:125px;"></div>
<div class="cell" style="left:357px;width:95px;">Q16</div>
<div class="cell" style="left:452px;width:95px;">109S</div>
<div class="cell" style="left:547px;width:137px;">1997 DROP</div>
<div class="cell" style="left:684px;width:50px;">Joined</div>
</div>
<div class="row y" style="top:613px">
<div class="cell" style="left:0px;width:95px;font-weight:bold;">BGXV2</div>
<div class="cell" style="left:95px;width:35px;">18.5 yr</div>
<div class="cell" style="left:130px;width:77px;">29/02/2000</div>
<div class="cell" style="left:207px;width:25px;">M</div>
<div class="cell" style="left:232px;width:125px;"></div>
<div class="cell" style="left:357px;width:95px;">USA036</div>
<div class="cell" style="left:452px;width:95px;">NAQT23</div>
<div class="cell" style="left:547px;width:137px;">SIRES</div>
<div class="cell" style="left:684px;width:50px;"></div>
</div>
<div class="row g" style="top:631px">
<div class="cell" style="left:0px;width:95px;font-weight:bold;">C277</div>
<div class="cell" style="left:95px;width:35px;">23.0 yr</div>
<div class="cell" style="left:130px;width:77px;">30/09/1995</div>
<div class="cell" style="left:207px;width:25px;">F</div>
<div class="cell" style="left:232px;width:125px;"></div>
<div class="cell" style="left:357px;width:95px;"></div>
<div class="cell" style="left:452px;width:95px;"></div>
<div class="cell" style="left:547px;width:137px;">COWS</div>
<div class="cell" style="left:684px;width:50px;">Joined</div>
</div>
<div class="row y" style="top:649px">
<div class="cell" style="left:0px;width:95px;font-weight:bold;">C281</div>
<div class="cell" style="left:95px;width:35px;">23.0 yr</div>
<div class="cell" style="left:130px;width:77px;">30/09/1995</div>
<div class="cell" style="left:207px;width:25px;">F</div>
<div class="cell" style="left:232px;width:125px;"></div>
<div class="cell" style="left:357px;width:95px;"></div>
<div class="cell" style="left:452px;width:95px;"></div>
<div class="cell" style="left:547px;width:137px;">COWS</div>
<div class="cell" style="left:684px;width:50px;">Joined</div>
</div>
<div class="row g" style="top:667px">
<div class="cell" style="left:0px;width:95px;font-weight:bold;">C283</div>
<div class="cell" style="left:95px;width:35px;">23.0 yr</div>
<div class="cell" style="left:130px;width:77px;">30/09/1995</div>
<div class="cell" style="left:207px;width:25px;">F</div>
<div class="cell" style="left:232px;width:125px;"></div>
<div class="cell" style="left:357px;width:95px;"></div>
<div class="cell" style="left:452px;width:95px;"></div>
<div class="cell" style="left:547px;width:137px;">COWS</div>
<div class="cell" style="left:684px;width:50px;">Joined</div>
</div>
<div class="row y" style="top:685px">
<div class="cell" style="left:0px;width:95px;font-weight:bold;">C295</div>
<div class="cell" style="left:95px;width:35px;">23.0 yr</div>
<div class="cell" style="left:130px;width:77px;">30/09/1995</div>
<div class="cell" style="left:207px;width:25px;">F</div>
<div class="cell" style="left:232px;width:125px;"></div>
<div class="cell" style="left:357px;width:95px;"></div>
<div class="cell" style="left:452px;width:95px;"></div>
<div class="cell" style="left:547px;width:137px;">COWS</div>
<div class="cell" style="left:684px;width:50px;">Joined</div>
</div>
<div class="row g" style="top:703px">
<div class="cell" style="left:0px;width:95px;font-weight:bold;">F003</div>
<div class="cell" style="left:95px;width:35px;">32.7 yr</div>
<div class="cell" style="left:130px;width:77px;">16/01/1986</div>
<div class="cell" style="left:207px;width:25px;">F</div>
<div class="cell" style="left:232px;width:125px;"></div>
<div class="cell" style="left:357px;width:95px;">VSTB4+82</div>
<div class="cell" style="left:452px;width:95px;">B111</div>
<div class="cell" style="left:547px;width:137px;">COWS</div>
<div class="cell" style="left:684px;width:50px;">Joined</div>
</div>
<div class="row y" style="top:721px">
<div class="cell" style="left:0px;width:95px;font-weight:bold;">F010</div>
<div class="cell" style="left:95px;width:35px;">32.5 yr</div>
<div class="cell" style="left:130px;width:77px;">17/03/1986</div>
<div class="cell" style="left:207px;width:25px;">F</div>
<div class="cell" style="left:232px;width:125px;"></div>
<div class="cell" style="left:357px;width:95px;">VSTB4+82</div>
<div class="cell" style="left:452px;width:95px;">B127</div>
<div class="cell" style="left:547px;width:137px;">COWS</div>
<div class="cell" style="left:684px;width:50px;">Dry</div>
</div>
<div class="row g" style="top:739px">
<div class="cell" style="left:0px;width:95px;font-weight:bold;">F019</div>
<div class="cell" style="left:95px;width:35px;">31.9 yr</div>
<div class="cell" style="left:130px;width:77px;">21/10/1986</div>
<div class="cell" style="left:207px;width:25px;">F</div>
<div class="cell" style="left:232px;width:125px;"></div>
<div class="cell" style="left:357px;width:95px;">USA3975</div>
<div class="cell" style="left:452px;width:95px;">X36</div>
<div class="cell" style="left:547px;width:137px;">COWS</div>
<div class="cell" style="left:684px;width:50px;">Joined</div>
</div>
<div class="row y" style="top:757px">
<div class="cell" style="left:0px;width:95px;font-weight:bold;">G07</div>
<div class="cell" style="left:95px;width:35px;">31.4 yr</div>
<div class="cell" style="left:130px;width:77px;">29/04/1987</div>
<div class="cell" style="left:207px;width:25px;">F</div>
<div class="cell" style="left:232px;width:125px;"></div>
<div class="cell" style="left:357px;width:95px;">USA3975</div>
<div class="cell" style="left:452px;width:95px;">Y79</div>
<div class="cell" style="left:547px;width:137px;">COWS</div>
<div class="cell" style="left:684px;width:50px;">Joined</div>
</div>
<div class="row g" style="top:775px">
<div class="cell" style="left:0px;width:95px;font-weight:bold;">G17</div>
<div class="cell" style="left:95px;width:35px;">30.9 yr</div>
<div class="cell" style="left:130px;width:77px;">17/10/1987</div>
<div class="cell" style="left:207px;width:25px;">F</div>
<div class="cell" style="left:232px;width:125px;"></div>
<div class="cell" style="left:357px;width:95px;">USA2943</div>
<div class="cell" style="left:452px;width:95px;">D1</div>
<div class="cell" style="left:547px;width:137px;">COWS</div>
<div class="cell" style="left:684px;width:50px;">Joined</div>
</div>
<div class="row y" style="top:793px">
<div class="cell" style="left:0px;width:95px;font-weight:bold;">H08</div>
<div class="cell" style="left:95px;width:35px;">30.0 yr</div>
<div class="cell" style="left:130px;width:77px;">31/08/1988</div>
<div class="cell" style="left:207px;width:25px;">F</div>
<div class="cell" style="left:232px;width:125px;"></div>
<div class="cell" style="left:357px;width:95px;">USA2943</div>
<div class="cell" style="left:452px;width:95px;">E013</div>
<div class="cell" style="left:547px;width:137px;">COWS</div>
<div class="cell" style="left:684px;width:50px;">Joined</div>
</div>
<div class="a" style="left:188px;top:144px;width:1px;height:666px;background:#fff"></div>
<div class="a" style="left:283px;top:144px;width:1px;height:666px;background:#fff"></div>
<div class="a" style="left:318px;top:144px;width:1px;height:666px;background:#fff"></div>
<div class="a" style="left:395px;top:144px;width:1px;height:666px;background:#fff"></div>
<div class="a" style="left:420px;top:144px;width:1px;height:666px;background:#fff"></div>
<div class="a" style="left:545px;top:144px;width:1px;height:666px;background:#fff"></div>
<div class="a" style="left:640px;top:144px;width:1px;height:666px;background:#fff"></div>
<div class="a" style="left:735px;top:144px;width:1px;height:666px;background:#fff"></div>
<div class="a" style="left:872px;top:144px;width:1px;height:666px;background:#fff"></div>
<svg class="a" style="left:178px;top:255px" width="8" height="13" viewBox="0 0 8 13"><path d="M1.2 1.2 L6.4 6.3 L1.2 11.4" fill="none" stroke="#000" stroke-width="1.3"/><rect x="1" y="5.4" width="2" height="2" fill="#000"/></svg>
<div class="a" style="left:176px;top:819px;width:745px;height:15px;background:#ececec"></div>
<div class="a" style="left:193px;top:819px;width:17px;height:15px;background:#c1c1c1"></div>
<svg class="a" style="left:180px;top:822px" width="7" height="9" viewBox="0 0 7 9"><path d="M5.6 1 L2 4.5 L5.6 8" fill="none" stroke="#404040" stroke-width="2"/></svg>
<div class="cb" style="left:10px;top:840px"><svg class="a" style="left:1px;top:1px" width="9" height="9" viewBox="0 0 9 9"><path d="M1 4.4 L3.5 7 L8 1.6" fill="none" stroke="#000" stroke-width="1.9"/></svg></div>
<div class="cb" style="left:10px;top:854px"><svg class="a" style="left:1px;top:1px" width="9" height="9" viewBox="0 0 9 9"><path d="M1 4.4 L3.5 7 L8 1.6" fill="none" stroke="#000" stroke-width="1.9"/></svg></div>
<div class="t" style="left:28.70px;top:840px;font-size:11px;letter-spacing:0.296px;font-weight:bold;">Auto-Refresh</div>
<div class="t" style="left:29.00px;top:854px;font-size:11px;letter-spacing:0.275px;font-weight:bold;">Show Tree</div>
<div class="cb" style="left:125px;top:838px"></div>
<div class="t" style="left:143.50px;top:838px;font-size:11px;letter-spacing:0.067px;font-weight:bold;"><u>I</u>nclude Inactive</div>
<div class="t" style="left:239.80px;top:841px;font-size:11px;letter-spacing:-0.006px;font-style:italic;color:#8b0a0a;">Group select: Shift + mouse</div>
<div class="t" style="left:238.20px;top:855px;font-size:11px;letter-spacing:0.041px;font-style:italic;color:#8b0a0a;">Random-select: Ctrl + mouse</div>
<div class="t" style="left:435.30px;top:841px;font-size:11px;letter-spacing:-0.328px;font-weight:bold;">784</div>
<div class="t" style="left:435.60px;top:855px;font-size:11px;letter-spacing:-2.219px;font-weight:bold;">1</div>
<div class="t" style="left:482.20px;top:841px;font-size:11px;letter-spacing:0.270px;font-weight:bold;">Animals listed</div>
<div class="t" style="left:482.20px;top:855px;font-size:11px;letter-spacing:0.376px;font-weight:bold;">Animals selected</div>
<div class="btn" style="left:585px;top:846px;width:82px;height:21px"><div class="t" style="left:3.90px;top:3px;font-size:11px;letter-spacing:0.129px;font-weight:bold;">List Statistics</div></div>
<div class="btn" style="left:675px;top:846px;width:92px;height:21px"><div class="t" style="left:3.50px;top:2px;font-size:11px;letter-spacing:0.069px;font-weight:bold;">Change Display</div></div>
<div class="a" style="left:0;top:874px;width:921px;height:40px;box-sizing:border-box;border-top:1px solid #a0a0a0;border-left:1px solid #a0a0a0;box-shadow:inset 1px 1px 0 #696969;"></div>
<div class="a" style="left:0;top:913px;width:921px;height:1px;background:#e4e4e4"></div>
<div class="a" style="left:0;top:914px;width:921px;height:20px;background:#fff"></div>
<div class="a" style="left:0;top:917px;width:921px;height:1px;background:#5a5a5a"></div>
<div class="btn" style="left:9px;top:883px;width:93px;height:23px;"><svg class="a" style="left:8px;top:4px" width="14" height="14" viewBox="0 0 14 14"><path d="M2.2 1.8 Q6 5 12.2 12.4 M11.8 1.6 Q7 6 1.8 12.4" stroke="#a80000" stroke-width="3.6" fill="none" stroke-linecap="round"/></svg><div class="t" style="left:27.10px;top:4px;font-size:11px;letter-spacing:-0.063px;font-weight:bold;"><u>C</u>ancel/Exit</div></div>
<div class="a" style="left:115px;top:882px;width:59px;height:26px;box-sizing:border-box;border:2px solid #c00010;box-shadow:2px 3px 4px rgba(0,0,0,.35),inset 0 0 0 .5px #c00010"></div>
<div class="btn" style="left:117px;top:883px;width:55px;height:24px;border-color:#c8c8c8 #e1e1e1 #e1e1e1 #c8c8c8;box-shadow:inset 1px 2px 2px rgba(0,0,0,.12)"><svg class="a" style="left:3px;top:1px" width="20" height="20" viewBox="0 0 20 20"><g stroke="#f4ec00" stroke-width="1.4"><path d="M2.5 2.5 L5.5 5.5 M17.5 3 L14.8 5.6 M2.5 17.5 L5.5 14.8 M17.5 17.5 L14.8 14.8 M1 10 L4 10 M16 10 L19 10"/></g><path d="M5.6 4.6 H11.2 L14.8 8.2 V15.6 H5.6 Z" fill="#fff" stroke="#000" stroke-width="1.3"/><path d="M11.2 4.6 V8.2 H14.8" fill="none" stroke="#000" stroke-width="1.1"/></svg><div class="t" style="left:25.00px;top:4px;font-size:11px;letter-spacing:0.159px;font-weight:bold;"><u>A</u>dd</div></div>
<div class="btn" style="left:175px;top:883px;width:18px;height:23px"><svg class="a" style="left:4px;top:3px" width="11" height="17" viewBox="0 0 11 17"><path d="M8.6 0.5 L10.4 15.8 L0.4 13.2 Z" fill="#1020d0"/><circle cx="7" cy="8.5" r="1" fill="#ffe000"/><circle cx="4.5" cy="12" r=".9" fill="#ffe000"/><circle cx="8.5" cy="13" r=".8" fill="#ffe000"/></svg></div>
<div class="btn" style="left:200px;top:883px;width:83px;height:23px;"><svg class="a" style="left:4px;top:4px" width="17" height="14" viewBox="0 0 17 14"><path d="M6 1 L16 2.5 L11 7 L1 5.5 Z" fill="#fff" stroke="#000" stroke-width="1.2"/><path d="M5.5 3 L16 4.8 L11 9 L1 7.4 Z" fill="#fff" stroke="#000" stroke-width="1.2"/><path d="M1 7.4 L11 9 L16 4.8 V9 L11 13.2 L1 11.6 Z" fill="#d01010" stroke="#000" stroke-width="1.2"/></svg><div class="t" style="left:24.70px;top:4px;font-size:11px;letter-spacing:0.133px;font-weight:bold;"><u>M</u>ulti-Add</div></div>
<div class="btn" style="left:286px;top:883px;width:58px;height:23px;border-color:#3c96e6;background:#e5f1fb;"><svg class="a" style="left:7px;top:2px" width="18" height="18" viewBox="0 0 18 18"><path d="M7.5 1.5 H13.6 L17 5 V16.5 H7.5 Z" fill="#fff" stroke="#000" stroke-width="1"/><path d="M13.6 1.5 V5 H17" fill="none" stroke="#000" stroke-width=".9"/><path d="M12 8 H15 M13 10.5 H15.5 M10.5 13 H12 M13.5 14.5 H15.5 M9.5 3.8 H11.5" stroke="#000" stroke-width="1" stroke-dasharray="1 1"/><path d="M3.6 1.6 L5.2 1 L13.4 10.4 L12 11.4 Z" fill="#f0dc00" stroke="#000" stroke-width=".8"/><path d="M3.6 1.6 L5.2 1 L6 2.2 L4.6 3 Z" fill="#e00000"/><path d="M2.4 6.6 L6.4 5.6 L9.4 8.2 L11.6 8.8 L11.8 10.4 L9.8 10.6 L10.4 12.6 L9 14.6 H4.4 L2.4 13 Z" fill="#ffff58" stroke="#000" stroke-width="1"/><rect x="0.8" y="6.4" width="1.8" height="6.8" fill="#20d0e0" stroke="#000" stroke-width=".5"/></svg><div class="t" style="left:28.30px;top:4px;font-size:11px;letter-spacing:-0.354px;font-weight:bold;"><u>E</u>dit</div></div>
<div class="btn" style="left:347px;top:883px;width:70px;height:23px;"><svg class="a" style="left:8px;top:2px" width="13" height="18" viewBox="0 0 13 18"><path d="M4.6 2.6 V1.2 H8.4 V2.6" fill="none" stroke="#000" stroke-width="1.3"/><rect x="1.6" y="2.8" width="9.8" height="2.6" fill="#888" stroke="#000" stroke-width="1.1"/><path d="M2.2 6.4 H10.8 L10.4 16.6 H2.6 Z" fill="#d0d0d0" stroke="#000" stroke-width="1.2"/><path d="M4.2 6.8 V16 M6.5 6.8 V16 M8.8 6.8 V16" stroke="#000" stroke-width="1.3"/><path d="M0.2 8.6 L2 7.4 M12.8 8.6 L11 7.4" stroke="#000" stroke-width="1"/></svg><div class="t" style="left:27.20px;top:4px;font-size:11px;letter-spacing:0.260px;font-weight:bold;"><u>D</u>elete</div></div>
<div class="btn" style="left:420px;top:883px;width:70px;height:23px;"><svg class="a" style="left:11px;top:2px" width="17" height="18" viewBox="0 0 17 18"><path d="M3.8 9 V1.2 H9.6 L12.6 4.2 V9" fill="#fff" stroke="#000" stroke-width="1.3"/><path d="M5.6 3.6 H8 M5.6 5.8 H10.6 M8 3.6 V5.8" stroke="#000" stroke-width="1.2"/><path d="M0.8 9 H15.6 V13 H0.8 Z" fill="#fff" stroke="#000" stroke-width="1.3"/><path d="M2.4 11 H12" stroke="#000" stroke-width="1" stroke-dasharray="1 1"/><rect x="12.4" y="10.2" width="1.6" height="1.6" fill="#e00000"/><path d="M0.8 14.6 H15.6" stroke="#000" stroke-width="1.4"/><path d="M1.6 16.6 H14.8" stroke="#000" stroke-width="1.6"/></svg><div class="t" style="left:31.60px;top:4px;font-size:11px;letter-spacing:0.144px;font-weight:bold;"><u>P</u>rint</div></div>
<div class="btn" style="left:502px;top:883px;width:70px;height:23px;"><svg class="a" style="left:5.199999999999989px;top:2px" width="17" height="18" viewBox="0 0 17 18"><path d="M2 1.2 L5.6 3.6 L6.6 1.4 L8.2 4 L9.8 1.4 L10.8 3.6 L14.4 1.2 L11.6 5 L8.2 5.8 L4.8 5 Z" fill="#ffff00" stroke="#303000" stroke-width=".5"/><path d="M0.4 4.6 H2 M0.2 8.2 H2.2 M0.4 10.6 H1.8 M14.4 4.6 H16 M14.2 8.2 H16.2 M14.6 10.6 H16" stroke="#ffee00" stroke-width="1.3"/><ellipse cx="4.4" cy="5.6" rx="3" ry="1.7" transform="rotate(-25 4.4 5.6)" fill="#b8b8b8" stroke="#000" stroke-width=".9"/><ellipse cx="12" cy="5.6" rx="3" ry="1.7" transform="rotate(25 12 5.6)" fill="#b8b8b8" stroke="#000" stroke-width=".9"/><circle cx="8.2" cy="11.4" r="5.9" fill="#000"/><circle cx="8.2" cy="11.4" r="5" fill="#ff0000"/><circle cx="8.2" cy="11.4" r="3.5" fill="#fff"/><path d="M8.2 8.6 V11.6 H6" fill="none" stroke="#000" stroke-width="1.1"/><path d="M10.4 11.6 H11.4 M6.2 9.4 H6.9 M9.8 9.4 H10.5 M6.2 13.6 H6.9 M9.8 13.6 H10.5 M8.2 13.8 V14.6" stroke="#000" stroke-width=".9"/><path d="M4 15.8 L1.6 17.2 M12.4 15.8 L14.8 17.2" stroke="#000" stroke-width="1.6"/></svg><div class="t" style="left:26.30px;top:4px;font-size:11px;letter-spacing:-0.079px;font-weight:bold;">E<u>v</u>ents</div></div>
<div class="btn" style="left:576px;top:883px;width:91px;height:23px;"><svg class="a" style="left:5.399999999999977px;top:2px" width="17" height="18" viewBox="0 0 17 18"><path d="M8.2 1.6 V4.4 M6.8 1.8 H9.6" stroke="#000" stroke-width="1.2"/><ellipse cx="4.4" cy="5.6" rx="3" ry="1.7" transform="rotate(-25 4.4 5.6)" fill="#b8b8b8" stroke="#000" stroke-width=".9"/><ellipse cx="12" cy="5.6" rx="3" ry="1.7" transform="rotate(25 12 5.6)" fill="#b8b8b8" stroke="#000" stroke-width=".9"/><circle cx="8.2" cy="11.4" r="5.9" fill="#000"/><circle cx="8.2" cy="11.4" r="5" fill="#ff0000"/><circle cx="8.2" cy="11.4" r="3.5" fill="#fff"/><path d="M8.2 8.6 V11.6 H6" fill="none" stroke="#000" stroke-width="1.1"/><path d="M10.4 11.6 H11.4 M6.2 9.4 H6.9 M9.8 9.4 H10.5 M6.2 13.6 H6.9 M9.8 13.6 H10.5 M8.2 13.8 V14.6" stroke="#000" stroke-width=".9"/><path d="M4 15.8 L1.6 17.2 M12.4 15.8 L14.8 17.2" stroke="#000" stroke-width="1.6"/></svg><div class="t" style="left:25.90px;top:4px;font-size:11px;letter-spacing:0.322px;font-weight:bold;"><u>T</u>reat/Feed</div></div>
<div class="btn" style="left:673px;top:883px;width:95px;height:23px;"><svg class="a" style="left:7px;top:2px" width="18" height="18" viewBox="0 0 18 18"><path d="M1 1 H8 L16.9 7.4 V16.9 H7.4 L1 13.4 Z" fill="#000"/><rect x="2" y="2.2" width="1.2" height="10.4" fill="#fff"/><rect x="4.2" y="3.2" width="1.2" height="11" fill="#fff"/><rect x="6.4" y="4.2" width="1.1" height="11.4" fill="#fff"/><path d="M8.5 5.4 H13.2 V8 H15.8 V15.8 H8.5 Z" fill="#fff"/><rect x="14" y="6.2" width="1" height="1" fill="#fff"/><path d="M9.6 6.9 H11.2 M9.6 8.9 H12.2 M9.6 10.9 H14.8 M9.6 12.8 H14.8 M9.6 14.6 H13" stroke="#000" stroke-width="1"/></svg><div class="t" style="left:29.10px;top:4px;font-size:11px;letter-spacing:0.210px;font-weight:bold;">Multi Treat</div></div>
<div class="btn" style="left:776px;top:883px;width:59px;height:23px;"><svg class="a" style="left:4px;top:3px" width="18" height="16" viewBox="0 0 18 16"><rect x="0.8" y="6.8" width="1.6" height="6.2" fill="#20f0f0" stroke="#000" stroke-width=".8"/><path d="M2.8 6.2 H4 L5 5.2 H8.2 V6.9 H13.6 V8.9 H9.4 V9.6 H10.4 V11.2 H9.6 V12.6 H8.8 V14 H4 L2.8 13.2 Z" fill="#ffff38" stroke="#000" stroke-width="1.1"/><rect x="14" y="1" width="3.2" height="1.6" fill="#000"/><rect x="15" y="4" width="2.2" height="1.6" fill="#000"/><rect x="15" y="7" width="2.2" height="2" fill="#ff0000"/><rect x="15" y="10.4" width="2.2" height="1.6" fill="#000"/><rect x="14" y="13.4" width="3.2" height="1.6" fill="#000"/></svg><div class="t" style="left:25.80px;top:4px;font-size:11px;letter-spacing:0.189px;font-weight:bold;">Lists</div></div>
<div class="tsep" style="left:21px"></div>
<div class="tsep" style="left:72px"></div>
<div class="tsep" style="left:121px"></div>
<div class="tsep" style="left:178px"></div>
<div class="tsep" style="left:217px"></div>
<div class="tsep" style="left:247px"></div>
<div class="tsep" style="left:289px"></div>
<div class="tsep" style="left:330px"></div>
<div class="tsep" style="left:360px"></div>
<div class="tsep" style="left:420px"></div>
<div class="tsep" style="left:477px"></div>
<div class="tsep" style="left:511px"></div>
<div class="tsep" style="left:559px"></div>
<div class="tsep" style="left:591px"></div>
<div class="tsep" style="left:620px"></div>
<div class="tsep" style="left:658px"></div>
<div class="tsep" style="left:693px"></div>
<div class="tsep" style="left:746px"></div>
<div class="tsep" style="left:810px"></div>
<div class="t" style="left:27.50px;top:919px;font-size:10.8px;letter-spacing:-0.286px;color:#0808ee;">Pedigree</div>
<div class="t" style="left:78.20px;top:919px;font-size:10.8px;letter-spacing:-0.172px;color:#0808ee;">Progeny</div>
<div class="t" style="left:127.40px;top:919px;font-size:10.8px;letter-spacing:-0.246px;color:#0808ee;">Movement</div>
<div class="t" style="left:185.30px;top:919px;font-size:10.8px;letter-spacing:-0.259px;color:#0808ee;">Group</div>
<div class="t" style="left:223.60px;top:919px;font-size:10.8px;letter-spacing:-0.246px;color:#0808ee;">Mob</div>
<div class="t" style="left:252.80px;top:919px;font-size:10.8px;letter-spacing:-0.204px;color:#0808ee;">Joining</div>
<div class="t" style="left:294.90px;top:919px;font-size:10.8px;letter-spacing:-0.083px;color:#0808ee;">Weight</div>
<div class="t" style="left:337.20px;top:919px;font-size:10.8px;letter-spacing:-0.074px;color:#0808ee;">Trait</div>
<div class="t" style="left:366.80px;top:919px;font-size:10.8px;letter-spacing:-0.116px;color:#0808ee;">Treat/Feed</div>
<div class="t" style="left:427.60px;top:919px;font-size:10.8px;letter-spacing:0.235px;color:#0808ee;">Gen. Vet.</div>
<div class="t" style="left:483.90px;top:919px;font-size:10.8px;letter-spacing:-0.112px;color:#0808ee;">Scan</div>
<div class="t" style="left:517.40px;top:919px;font-size:10.8px;letter-spacing:-0.088px;color:#0808ee;">Carcase</div>
<div class="t" style="left:567.70px;top:919px;font-size:10.8px;letter-spacing:-0.100px;color:#0808ee;">EBV</div>
<div class="t" style="left:597.40px;top:919px;font-size:10.8px;letter-spacing:-0.772px;color:#0808ee;">Note</div>
<div class="t" style="left:628.00px;top:919px;font-size:10.8px;letter-spacing:-0.052px;color:#0808ee;">Costs</div>
<div class="t" style="left:665.50px;top:919px;font-size:10.8px;letter-spacing:-0.654px;color:#0808ee;">Photo</div>
<div class="t" style="left:701.10px;top:919px;font-size:10.8px;letter-spacing:0.085px;color:#0808ee;">Vet. Act.</div>
<div class="t" style="left:752.80px;top:919px;font-size:10.8px;letter-spacing:-0.074px;color:#0808ee;">Status Hist.</div>
</body></html>
